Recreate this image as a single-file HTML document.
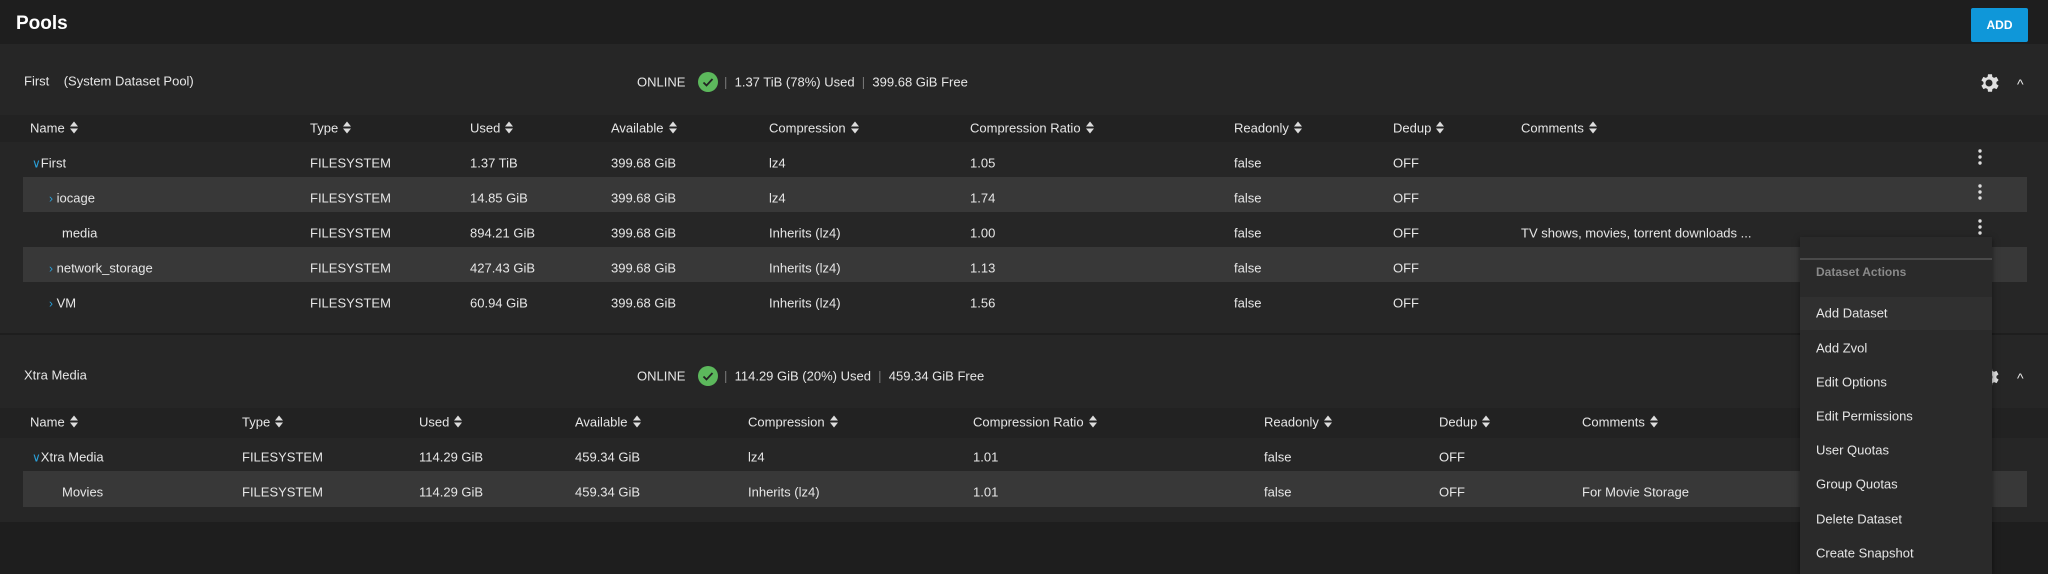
<!DOCTYPE html>
<html><head><meta charset="utf-8"><style>
*{margin:0;padding:0;box-sizing:border-box}
body{width:2048px;height:574px;background:#1e1e1e;font-family:"Liberation Sans",sans-serif;font-size:13px;color:#e6e6e6;position:relative;overflow:hidden}
.a{position:absolute;white-space:nowrap}
.card{position:absolute;left:0;width:2048px;background:#262626}
.hdr{position:absolute;left:0;width:2048px;background:#222222}
.hl{position:absolute;left:23px;width:2004px;height:35px;background:#383838}
.t{position:absolute;white-space:nowrap;transform:translateY(-50%)}
.s{display:inline-block;width:8px;height:12px;vertical-align:-1px;margin-left:5px}
.ch{color:#2a9fd8;font-size:12px}
.menu{position:absolute;left:1800px;top:237px;width:192px;height:337px;background:#2a2a2a;box-shadow:0 2px 6px rgba(0,0,0,.5)}
.mi{position:absolute;left:16px;transform:translateY(-50%);white-space:nowrap}
</style></head><body>
<div class="t" style="left:16px;top:24px;font-size:19px;font-weight:bold;color:#fff">Pools</div>
<div class="a" style="left:1971px;top:8px;width:57px;height:34px;background:#0f97d9;border-radius:2px;color:#fff;font-size:12px;font-weight:bold;text-align:center;line-height:34px">ADD</div>

<div class="card" style="top:44px;height:289px"></div>
<div class="hdr" style="top:115px;height:27px"></div>
<div class="hl" style="top:177px"></div>
<div class="hl" style="top:247px"></div>

<div class="card" style="top:335px;height:187px"></div>
<div class="hdr" style="top:408px;height:30px"></div>
<div class="hl" style="top:471px;height:36px"></div>

<svg width="0" height="0" style="position:absolute"><defs><symbol id="srt" viewBox="0 0 8 12"><path d="M4 0L8 5H0Z M4 12L8 7H0Z" fill="#ddd"/></symbol>
<symbol id="chk" viewBox="0 0 20 20"><circle cx="10" cy="10" r="10" fill="#5cb85c"/><path d="M5.5 10.5l3 3 6-6.5" stroke="#222" stroke-width="1.8" fill="none"/></symbol>
<symbol id="gear" viewBox="0 0 24 24"><path fill="#e0e0e0" d="M19.4 13a7.5 7.5 0 000-2l2.1-1.6-2-3.5-2.5 1a7 7 0 00-1.7-1L15 3.2h-4l-.4 2.7a7 7 0 00-1.7 1l-2.5-1-2 3.5L6.5 11a7.5 7.5 0 000 2l-2.1 1.6 2 3.5 2.5-1a7 7 0 001.7 1l.4 2.7h4l.4-2.7a7 7 0 001.7-1l2.5 1 2-3.5zM12 15.5A3.5 3.5 0 1112 8.5a3.5 3.5 0 010 7z"/></symbol>
<symbol id="keb" viewBox="0 0 4 16"><circle cx="2" cy="2" r="1.7" fill="#ddd"/><circle cx="2" cy="8" r="1.7" fill="#ddd"/><circle cx="2" cy="14" r="1.7" fill="#ddd"/></symbol></defs></svg>

<div class="t" style="left:24px;top:81px">First &nbsp;&nbsp; (System Dataset Pool)</div>
<div class="t" style="left:637px;top:82px">ONLINE</div>
<svg class="a" style="left:698px;top:72px" width="20" height="20"><use href="#chk"/></svg>
<div class="t" style="left:724px;top:82px"><span style="color:#777">|</span>&nbsp; 1.37 TiB (78%) Used &nbsp;<span style="color:#777">|</span>&nbsp; 399.68 GiB Free</div>
<svg class="a" style="left:1977px;top:71px" width="24" height="24"><use href="#gear"/></svg>
<div class="t" style="left:2017px;top:84px;font-size:14px">&#94;</div>

<div class="t" style="left:30px;top:128px">Name<svg class="s"><use href="#srt"/></svg></div>
<div class="t" style="left:310px;top:128px">Type<svg class="s"><use href="#srt"/></svg></div>
<div class="t" style="left:470px;top:128px">Used<svg class="s"><use href="#srt"/></svg></div>
<div class="t" style="left:611px;top:128px">Available<svg class="s"><use href="#srt"/></svg></div>
<div class="t" style="left:769px;top:128px">Compression<svg class="s"><use href="#srt"/></svg></div>
<div class="t" style="left:970px;top:128px">Compression Ratio<svg class="s"><use href="#srt"/></svg></div>
<div class="t" style="left:1234px;top:128px">Readonly<svg class="s"><use href="#srt"/></svg></div>
<div class="t" style="left:1393px;top:128px">Dedup<svg class="s"><use href="#srt"/></svg></div>
<div class="t" style="left:1521px;top:128px">Comments<svg class="s"><use href="#srt"/></svg></div>

<div class="t" style="left:32px;top:163px"><span class="ch">&#8744;</span>First</div>
<div class="t" style="left:49px;top:198px"><span class="ch">&#x203A;</span> iocage</div>
<div class="t" style="left:62px;top:233px">media</div>
<div class="t" style="left:49px;top:268px"><span class="ch">&#x203A;</span> network_storage</div>
<div class="t" style="left:49px;top:303px"><span class="ch">&#x203A;</span> VM</div>

<div class="t" style="left:310px;top:163px">FILESYSTEM</div><div class="t" style="left:470px;top:163px">1.37 TiB</div><div class="t" style="left:611px;top:163px">399.68 GiB</div><div class="t" style="left:769px;top:163px">lz4</div><div class="t" style="left:970px;top:163px">1.05</div><div class="t" style="left:1234px;top:163px">false</div><div class="t" style="left:1393px;top:163px">OFF</div>
<div class="t" style="left:310px;top:198px">FILESYSTEM</div><div class="t" style="left:470px;top:198px">14.85 GiB</div><div class="t" style="left:611px;top:198px">399.68 GiB</div><div class="t" style="left:769px;top:198px">lz4</div><div class="t" style="left:970px;top:198px">1.74</div><div class="t" style="left:1234px;top:198px">false</div><div class="t" style="left:1393px;top:198px">OFF</div>
<div class="t" style="left:310px;top:233px">FILESYSTEM</div><div class="t" style="left:470px;top:233px">894.21 GiB</div><div class="t" style="left:611px;top:233px">399.68 GiB</div><div class="t" style="left:769px;top:233px">Inherits (lz4)</div><div class="t" style="left:970px;top:233px">1.00</div><div class="t" style="left:1234px;top:233px">false</div><div class="t" style="left:1393px;top:233px">OFF</div><div class="t" style="left:1521px;top:233px">TV shows, movies, torrent downloads ...</div>
<div class="t" style="left:310px;top:268px">FILESYSTEM</div><div class="t" style="left:470px;top:268px">427.43 GiB</div><div class="t" style="left:611px;top:268px">399.68 GiB</div><div class="t" style="left:769px;top:268px">Inherits (lz4)</div><div class="t" style="left:970px;top:268px">1.13</div><div class="t" style="left:1234px;top:268px">false</div><div class="t" style="left:1393px;top:268px">OFF</div>
<div class="t" style="left:310px;top:303px">FILESYSTEM</div><div class="t" style="left:470px;top:303px">60.94 GiB</div><div class="t" style="left:611px;top:303px">399.68 GiB</div><div class="t" style="left:769px;top:303px">Inherits (lz4)</div><div class="t" style="left:970px;top:303px">1.56</div><div class="t" style="left:1234px;top:303px">false</div><div class="t" style="left:1393px;top:303px">OFF</div>

<svg class="a" style="left:1978px;top:149px" width="4" height="16"><use href="#keb"/></svg>
<svg class="a" style="left:1978px;top:184px" width="4" height="16"><use href="#keb"/></svg>
<svg class="a" style="left:1978px;top:219px" width="4" height="16"><use href="#keb"/></svg>

<div class="t" style="left:24px;top:375px">Xtra Media</div>
<div class="t" style="left:637px;top:376px">ONLINE</div>
<svg class="a" style="left:698px;top:366px" width="20" height="20"><use href="#chk"/></svg>
<div class="t" style="left:724px;top:376px"><span style="color:#777">|</span>&nbsp; 114.29 GiB (20%) Used &nbsp;<span style="color:#777">|</span>&nbsp; 459.34 GiB Free</div>
<svg class="a" style="left:1977px;top:365px" width="24" height="24"><use href="#gear"/></svg>
<div class="t" style="left:2017px;top:378px;font-size:14px">&#94;</div>

<div class="t" style="left:30px;top:422px">Name<svg class="s"><use href="#srt"/></svg></div>
<div class="t" style="left:242px;top:422px">Type<svg class="s"><use href="#srt"/></svg></div>
<div class="t" style="left:419px;top:422px">Used<svg class="s"><use href="#srt"/></svg></div>
<div class="t" style="left:575px;top:422px">Available<svg class="s"><use href="#srt"/></svg></div>
<div class="t" style="left:748px;top:422px">Compression<svg class="s"><use href="#srt"/></svg></div>
<div class="t" style="left:973px;top:422px">Compression Ratio<svg class="s"><use href="#srt"/></svg></div>
<div class="t" style="left:1264px;top:422px">Readonly<svg class="s"><use href="#srt"/></svg></div>
<div class="t" style="left:1439px;top:422px">Dedup<svg class="s"><use href="#srt"/></svg></div>
<div class="t" style="left:1582px;top:422px">Comments<svg class="s"><use href="#srt"/></svg></div>

<div class="t" style="left:32px;top:457px"><span class="ch">&#8744;</span>Xtra Media</div>
<div class="t" style="left:242px;top:457px">FILESYSTEM</div><div class="t" style="left:419px;top:457px">114.29 GiB</div><div class="t" style="left:575px;top:457px">459.34 GiB</div><div class="t" style="left:748px;top:457px">lz4</div><div class="t" style="left:973px;top:457px">1.01</div><div class="t" style="left:1264px;top:457px">false</div><div class="t" style="left:1439px;top:457px">OFF</div>
<div class="t" style="left:62px;top:492px">Movies</div>
<div class="t" style="left:242px;top:492px">FILESYSTEM</div><div class="t" style="left:419px;top:492px">114.29 GiB</div><div class="t" style="left:575px;top:492px">459.34 GiB</div><div class="t" style="left:748px;top:492px">Inherits (lz4)</div><div class="t" style="left:973px;top:492px">1.01</div><div class="t" style="left:1264px;top:492px">false</div><div class="t" style="left:1439px;top:492px">OFF</div><div class="t" style="left:1582px;top:492px">For Movie Storage</div>

<div class="menu">
<div class="a" style="left:0;top:21px;width:192px;height:2px;background:#4a4a4a"></div>
<div class="mi" style="top:35px;color:#8a8a8a;font-weight:bold;font-size:12px">Dataset Actions</div>
<div class="a" style="left:0;top:60px;width:192px;height:33px;background:#303030"></div>
<div class="mi" style="top:76px">Add Dataset</div>
<div class="mi" style="top:111px">Add Zvol</div>
<div class="mi" style="top:145px">Edit Options</div>
<div class="mi" style="top:179px">Edit Permissions</div>
<div class="mi" style="top:213px">User Quotas</div>
<div class="mi" style="top:247px">Group Quotas</div>
<div class="mi" style="top:282px">Delete Dataset</div>
<div class="mi" style="top:316px">Create Snapshot</div>
</div>
</body></html>
